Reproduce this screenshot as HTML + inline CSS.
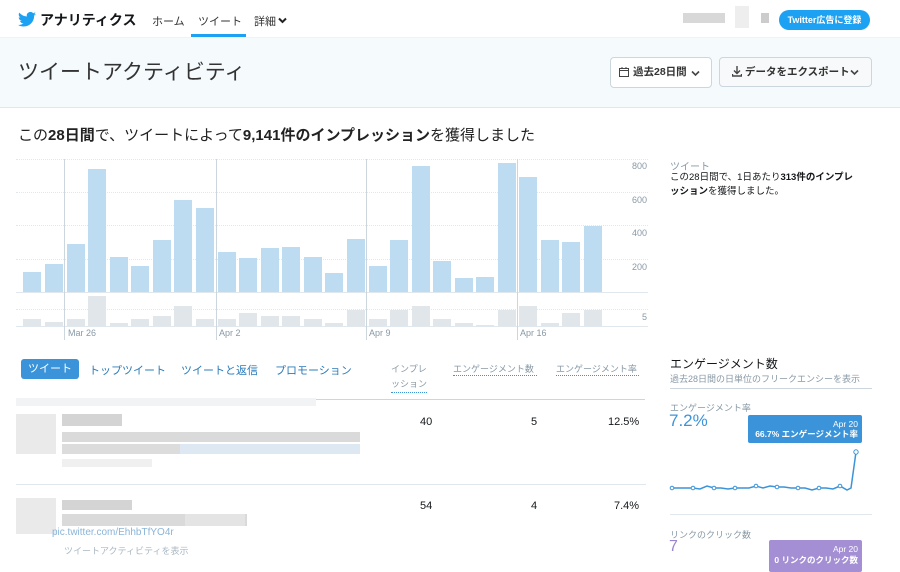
<!DOCTYPE html>
<html><head><meta charset="utf-8"><style>
*{margin:0;padding:0;box-sizing:border-box}
body{width:900px;height:572px;overflow:hidden;background:#fff;font-family:"Liberation Sans","Noto Sans CJK JP",sans-serif;color:#14171a;position:relative}
.a{position:absolute;white-space:nowrap}
.bar{position:absolute;width:18px;background:#bddcf2}
.g{position:absolute;width:18px;background:#e1e6ea}
.hl{position:absolute;left:16px;width:632px;border-top:1px dotted #e1e8ed}
.vl{position:absolute;top:159px;height:181px;width:1px;background:#ccd6dd}
.xl{position:absolute;top:328px;font-size:9px;color:#8899a6}
.yl{position:absolute;left:632px;font-size:9px;color:#8899a6}
.blur{position:absolute;background:#ddd}
</style></head><body>
<svg class="a" style="left:18px;top:12px" width="18" height="15" viewBox="0 0 24 20"><path fill="#1da1f2" d="M24 2.4a9.8 9.8 0 0 1-2.8.8A4.9 4.9 0 0 0 23.3.4a9.8 9.8 0 0 1-3.1 1.2A4.9 4.9 0 0 0 11.8 6 14 14 0 0 1 1.7.9a4.9 4.9 0 0 0 1.5 6.6 4.9 4.9 0 0 1-2.2-.6 4.9 4.9 0 0 0 3.9 4.8 4.9 4.9 0 0 1-2.2.1 4.9 4.9 0 0 0 4.6 3.4A9.9 9.9 0 0 1 0 17.2 14 14 0 0 0 7.5 19.4c9.1 0 14-7.5 14-14v-.6A10 10 0 0 0 24 2.4z"/></svg>
<div class="a" style="left:40px;top:10px;font-size:14px;font-weight:bold">アナリティクス</div>
<div class="a" style="left:152px;top:13px;font-size:11px;color:#333">ホーム</div>
<div class="a" style="left:198px;top:13px;font-size:11px;color:#333">ツイート</div>
<div class="a" style="left:191px;top:34px;width:55px;height:3px;background:#1da1f2"></div>
<div class="a" style="left:254px;top:13px;font-size:11px;color:#333">詳細</div>
<svg class="a" style="left:278px;top:17px" width="9" height="7" viewBox="0 0 9 7"><path d="M1 1.5l3.5 3.5 3.5-3.5" fill="none" stroke="#222" stroke-width="2"/></svg>
<div class="blur" style="left:683px;top:13px;width:42px;height:10px;background:#d8d8d8"></div>
<div class="blur" style="left:735px;top:6px;width:14px;height:22px;background:#eee"></div>
<div class="blur" style="left:761px;top:13px;width:8px;height:10px;background:#ccc"></div>
<div class="a" style="left:779px;top:10px;width:91px;height:20px;border-radius:10px;background:#1da1f2;color:#fff;font-size:9px;font-weight:bold;text-align:center;line-height:20px">Twitter広告に登録</div>
<div class="a" style="left:0;top:37px;width:900px;height:71px;background:#f5fafd;border-top:1px solid #eef3f6;border-bottom:1px solid #e1e8ed"></div>
<div class="a" style="left:18px;top:56px;font-size:21px;color:#333">ツイートアクティビティ</div>
<div class="a" style="left:610px;top:57px;width:102px;height:31px;border:1px solid #ccd6dd;border-radius:4px;background:#fff;font-size:10.5px;font-weight:bold;line-height:29px;padding-left:22px;color:#333">過去28日間</div>
<svg class="a" style="left:619px;top:67px" width="10" height="10" viewBox="0 0 10 10"><rect x="0.5" y="1.5" width="9" height="8" fill="none" stroke="#444"/><path d="M0.5 3.5h9M3 0v2M7 0v2" stroke="#444"/></svg>
<svg class="a" style="left:691px;top:70px" width="9" height="7" viewBox="0 0 9 7"><path d="M1 1.5l3.5 3.5 3.5-3.5" fill="none" stroke="#444" stroke-width="1.6"/></svg>
<div class="a" style="left:719px;top:57px;width:153px;height:30px;border:1px solid #ccd6dd;border-radius:4px;background:#f8f9fa;font-size:10.5px;font-weight:bold;line-height:28px;padding-left:25px;color:#333">データをエクスポート</div>
<svg class="a" style="left:732px;top:66px" width="10" height="11" viewBox="0 0 10 11"><path d="M5 0v7M2 4.5l3 3 3-3M0.5 8v2h9v-2" fill="none" stroke="#444" stroke-width="1.4"/></svg>
<svg class="a" style="left:850px;top:69px" width="9" height="7" viewBox="0 0 9 7"><path d="M1 1.5l3.5 3.5 3.5-3.5" fill="none" stroke="#444" stroke-width="1.6"/></svg>
<div class="a" style="left:18px;top:124px;font-size:15px;color:#222">この<b>28日間</b>で、ツイートによって<b>9,141件のインプレッション</b>を獲得しました</div>
<div class="hl" style="top:159px"></div><div class="hl" style="top:192px"></div><div class="hl" style="top:225px"></div><div class="hl" style="top:259px"></div>
<div class="hl" style="top:309px"></div>
<div class="a" style="left:16px;top:292px;width:632px;height:1px;background:#e1e8ed"></div>
<div class="a" style="left:16px;top:326px;width:632px;height:1px;background:#e1e8ed"></div>
<div class="vl" style="left:64px"></div><div class="vl" style="left:216px"></div><div class="vl" style="left:366px"></div><div class="vl" style="left:517px"></div>
<div class="xl" style="left:68px">Mar 26</div><div class="xl" style="left:219px">Apr 2</div><div class="xl" style="left:369px">Apr 9</div><div class="xl" style="left:520px">Apr 16</div>
<div class="yl" style="top:161px">800</div><div class="yl" style="top:195px">600</div><div class="yl" style="top:228px">400</div><div class="yl" style="top:262px">200</div><div class="yl" style="left:642px;top:312px">5</div>
<div class="bar" style="left:23px;top:272px;height:20px"></div>
<div class="bar" style="left:45px;top:264px;height:28px"></div>
<div class="bar" style="left:67px;top:244px;height:48px"></div>
<div class="bar" style="left:88px;top:169px;height:123px"></div>
<div class="bar" style="left:110px;top:257px;height:35px"></div>
<div class="bar" style="left:131px;top:266px;height:26px"></div>
<div class="bar" style="left:153px;top:240px;height:52px"></div>
<div class="bar" style="left:174px;top:200px;height:92px"></div>
<div class="bar" style="left:196px;top:208px;height:84px"></div>
<div class="bar" style="left:218px;top:252px;height:40px"></div>
<div class="bar" style="left:239px;top:258px;height:34px"></div>
<div class="bar" style="left:261px;top:248px;height:44px"></div>
<div class="bar" style="left:282px;top:247px;height:45px"></div>
<div class="bar" style="left:304px;top:257px;height:35px"></div>
<div class="bar" style="left:325px;top:273px;height:19px"></div>
<div class="bar" style="left:347px;top:239px;height:53px"></div>
<div class="bar" style="left:369px;top:266px;height:26px"></div>
<div class="bar" style="left:390px;top:240px;height:52px"></div>
<div class="bar" style="left:412px;top:166px;height:126px"></div>
<div class="bar" style="left:433px;top:261px;height:31px"></div>
<div class="bar" style="left:455px;top:278px;height:14px"></div>
<div class="bar" style="left:476px;top:277px;height:15px"></div>
<div class="bar" style="left:498px;top:163px;height:129px"></div>
<div class="bar" style="left:519px;top:177px;height:115px"></div>
<div class="bar" style="left:541px;top:240px;height:52px"></div>
<div class="bar" style="left:562px;top:242px;height:50px"></div>
<div class="bar" style="left:584px;top:226px;height:66px"></div>
<div class="g" style="left:23px;top:319px;height:7px"></div>
<div class="g" style="left:45px;top:322px;height:4px"></div>
<div class="g" style="left:67px;top:319px;height:7px"></div>
<div class="g" style="left:88px;top:296px;height:30px"></div>
<div class="g" style="left:110px;top:323px;height:3px"></div>
<div class="g" style="left:131px;top:319px;height:7px"></div>
<div class="g" style="left:153px;top:316px;height:10px"></div>
<div class="g" style="left:174px;top:306px;height:20px"></div>
<div class="g" style="left:196px;top:319px;height:7px"></div>
<div class="g" style="left:218px;top:319px;height:7px"></div>
<div class="g" style="left:239px;top:313px;height:13px"></div>
<div class="g" style="left:261px;top:316px;height:10px"></div>
<div class="g" style="left:282px;top:316px;height:10px"></div>
<div class="g" style="left:304px;top:319px;height:7px"></div>
<div class="g" style="left:325px;top:323px;height:3px"></div>
<div class="g" style="left:347px;top:310px;height:16px"></div>
<div class="g" style="left:369px;top:319px;height:7px"></div>
<div class="g" style="left:390px;top:310px;height:16px"></div>
<div class="g" style="left:412px;top:306px;height:20px"></div>
<div class="g" style="left:433px;top:319px;height:7px"></div>
<div class="g" style="left:455px;top:323px;height:3px"></div>
<div class="g" style="left:476px;top:325px;height:1px"></div>
<div class="g" style="left:498px;top:310px;height:16px"></div>
<div class="g" style="left:519px;top:306px;height:20px"></div>
<div class="g" style="left:541px;top:323px;height:3px"></div>
<div class="g" style="left:562px;top:313px;height:13px"></div>
<div class="g" style="left:584px;top:310px;height:16px"></div>
<div class="a" style="left:670px;top:158px;font-size:10px;color:#8899a6">ツイート</div>
<div class="a" style="left:670px;top:171px;font-size:9.5px;line-height:14px;color:#14171a">この28日間で、1日あたり<b>313件のインプレ</b><br><b>ッション</b>を獲得しました。</div>
<div class="a" style="left:21px;top:359px;width:58px;height:20px;background:#3b94d9;border-radius:3px;color:#fff;font-size:11px;text-align:center;line-height:20px">ツイート</div>
<div class="a" style="left:89px;top:362px;font-size:11px;color:#2b7bb9">トップツイート</div>
<div class="a" style="left:181px;top:362px;font-size:11px;color:#2b7bb9">ツイートと返信</div>
<div class="a" style="left:275px;top:362px;font-size:11px;color:#2b7bb9">プロモーション</div>
<div class="a" style="left:391px;top:362px;font-size:9px;color:#8899a6;line-height:15px;border-bottom:1px dotted #3b94d9">インプレ<br>ッション</div>
<div class="a" style="left:453px;top:362px;font-size:9px;color:#8899a6;border-bottom:1px dotted #3b94d9;width:84px">エンゲージメント数</div>
<div class="a" style="left:556px;top:362px;font-size:9px;color:#8899a6;border-bottom:1px dotted #3b94d9;width:83px">エンゲージメント率</div>
<div class="a" style="left:316px;top:399px;width:329px;height:1px;background:#ccd6dd"></div>
<div class="a" style="left:16px;top:398px;width:300px;height:8px;background:#f2f3f4"></div>
<div class="a" style="left:16px;top:484px;width:630px;height:1px;background:#e1e8ed"></div>
<div class="blur" style="left:16px;top:414px;width:40px;height:40px;background:#eaeaea"></div>
<div class="blur" style="left:62px;top:414px;width:60px;height:12px;background:#d4d4d4"></div>
<div class="blur" style="left:62px;top:432px;width:298px;height:10px;background:#dadada"></div>
<div class="blur" style="left:62px;top:444px;width:120px;height:10px;background:#dcdcdc"></div>
<div class="blur" style="left:180px;top:444px;width:180px;height:10px;background:#dde8f2"></div>
<div class="blur" style="left:62px;top:459px;width:90px;height:8px;background:#f0f0f0"></div>
<div class="a" style="left:420px;top:416px;font-size:11px">40</div>
<div class="a" style="left:531px;top:416px;font-size:11px">5</div>
<div class="a" style="left:608px;top:416px;font-size:11px">12.5%</div>
<div class="blur" style="left:16px;top:498px;width:40px;height:36px;background:#eaeaea"></div>
<div class="blur" style="left:62px;top:500px;width:70px;height:10px;background:#d4d4d4"></div>
<div class="blur" style="left:62px;top:514px;width:185px;height:12px;background:#dadada"></div>
<div class="blur" style="left:185px;top:514px;width:60px;height:12px;background:#e4e4e4"></div>
<div class="a" style="left:52px;top:527px;font-size:10px;color:#8ab4d8">pic.twitter.com/EhhbTfYO4r</div>
<div class="a" style="left:64px;top:544px;font-size:9px;color:#aab8c2">ツイートアクティビティを表示</div>
<div class="a" style="left:420px;top:500px;font-size:11px">54</div>
<div class="a" style="left:531px;top:500px;font-size:11px">4</div>
<div class="a" style="left:614px;top:500px;font-size:11px">7.4%</div>
<div class="a" style="left:670px;top:355px;font-size:12px;color:#14171a">エンゲージメント数</div>
<div class="a" style="left:670px;top:372px;font-size:9px;color:#8899a6">過去28日間の日単位のフリークエンシーを表示</div>
<div class="a" style="left:670px;top:388px;width:202px;height:1px;background:#ccd6dd"></div>
<div class="a" style="left:670px;top:401px;font-size:9px;color:#8899a6">エンゲージメント率</div>
<div class="a" style="left:669px;top:411px;font-size:17px;color:#3b94d9">7.2%</div>
<div class="a" style="left:748px;top:415px;width:114px;height:28px;background:#3b94d9;border-radius:2px;color:#fff;font-size:8.5px;text-align:right;padding:4px 4px 0 0;line-height:10px">Apr 20<br><b>66.7% エンゲージメント率</b></div>
<svg class="a" style="left:668px;top:440px" width="200" height="55">
<polyline fill="none" stroke="#3b94d9" stroke-width="1.5" points="4,48 11,48 18,48 25,48 32,49 39,46 46,48 53,48 60,49 67,48 74,48 81,48 88,46 95,48 102,46 109,47 116,47 123,48 130,48 137,48 144,50 151,48 158,48 165,49 172,46 179,50 183,48 188,12" />
<g fill="#fff" stroke="#3b94d9" stroke-width="1"><circle cx="4" cy="48" r="1.8"/><circle cx="25" cy="48" r="1.8"/><circle cx="46" cy="48" r="1.8"/><circle cx="67" cy="48" r="1.8"/><circle cx="88" cy="46" r="1.8"/><circle cx="109" cy="47" r="1.8"/><circle cx="130" cy="48" r="1.8"/><circle cx="151" cy="48" r="1.8"/><circle cx="172" cy="46" r="1.8"/><circle cx="188" cy="12" r="2.2"/></g>
</svg>
<div class="a" style="left:670px;top:514px;width:202px;height:1px;background:#e1e8ed"></div>
<div class="a" style="left:670px;top:528px;font-size:9px;color:#8899a6">リンクのクリック数</div>
<div class="a" style="left:669px;top:538px;font-size:16px;color:#9b85cf">7</div>
<div class="a" style="left:769px;top:540px;width:93px;height:32px;background:#a48fd4;border-radius:2px;color:#fff;font-size:8.5px;text-align:right;padding:4px 4px 0 0;line-height:11px">Apr 20<br><b>0 リンクのクリック数</b></div>
</body></html>
